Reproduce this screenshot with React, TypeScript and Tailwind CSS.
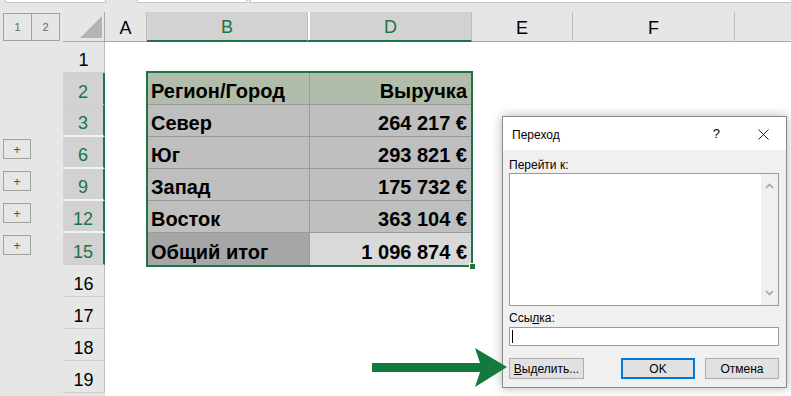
import { Fragment } from 'react';

const sheetFont = { fontFamily: '"Liberation Sans", Arial, sans-serif' };

type Row = { n: number; h: string; sel: boolean; hidden?: boolean; plus?: boolean };

const rows: Row[] = [
  { n: 1, h: 'h-[31px]', sel: false },
  { n: 2, h: 'h-[32px]', sel: true },
  { n: 3, h: 'h-[32px]', sel: true, hidden: true },
  { n: 6, h: 'h-[32px]', sel: true, hidden: true, plus: true },
  { n: 9, h: 'h-[32px]', sel: true, hidden: true, plus: true },
  { n: 12, h: 'h-[32px]', sel: true, hidden: true, plus: true },
  { n: 15, h: 'h-[32px]', sel: true, plus: true },
  { n: 16, h: 'h-[32px]', sel: false },
  { n: 17, h: 'h-[32px]', sel: false },
  { n: 18, h: 'h-[32px]', sel: false },
  { n: 19, h: 'h-[32px]', sel: false },
];

const data = [
  { name: 'Север', value: '264 217 €' },
  { name: 'Юг', value: '293 821 €' },
  { name: 'Запад', value: '175 732 €' },
  { name: 'Восток', value: '363 104 €' },
];

function ColHeader({ label, w, sel }: { label: string; w: string; sel?: boolean }) {
  return (
    <div
      className={`${w} flex shrink-0 items-center justify-center pt-[3px] text-[18px] ${
        sel
          ? 'border-b-2 border-b-[#217346] bg-[#d2d2d2] text-[#217346]'
          : 'border-b border-b-[#ababab] text-black'
      } border-r border-r-[#bdbdbd]`}
    >
      {label}
    </div>
  );
}

function GoToDialog() {
  return (
    <div
      className="absolute left-[502px] top-[116px] flex h-[272px] w-[285px] flex-col border border-[#8a8a8a] bg-[#f0f0f0] text-[12px] text-black shadow-[0_0_10px_rgba(0,0,0,0.3)]"
      style={{ fontFamily: '"Liberation Sans", Arial, sans-serif' }}
    >
      <div className="flex h-[33px] items-center bg-white pl-[9px] pr-[17px]">
        <span className="pt-[2px]">Переход</span>
        <span className="ml-auto mr-[38px] pt-[1px] text-[13px]">?</span>
        <svg width="11" height="11" viewBox="0 0 11 11" className="mt-[1px]">
          <path d="M0.5 0.5 L10.5 10.5 M10.5 0.5 L0.5 10.5" stroke="#222" strokeWidth="1" />
        </svg>
      </div>
      <div className="flex flex-1 flex-col pl-[6px] pr-[7px]">
        <div className="mt-[7px] h-[16px] leading-[16px]">Перейти к:</div>
        <div className="flex h-[133px] border border-[#9a9a9a] bg-white">
          <div className="flex-1" />
          <div className="flex w-[17px] flex-col items-center justify-between bg-[#f0f0f0] py-[9px]">
            <svg width="9" height="6" viewBox="0 0 9 6">
              <path d="M1 5 L4.5 1.5 L8 5" stroke="#a6a6a6" strokeWidth="1.6" fill="none" />
            </svg>
            <svg width="9" height="6" viewBox="0 0 9 6">
              <path d="M1 1 L4.5 4.5 L8 1" stroke="#a6a6a6" strokeWidth="1.6" fill="none" />
            </svg>
          </div>
        </div>
        <div className="mt-[4px] h-[16px] leading-[16px]">
          Ссы<span className="underline">л</span>ка:
        </div>
        <div className="mt-[1px] flex h-[19px] items-center border border-[#9a9a9a] bg-white pl-[2px]">
          <div className="h-[13px] w-px bg-black" />
        </div>
        <div className="mt-[12px] flex h-[21px]">
          <button className="flex w-[75px] items-center justify-center border border-[#adadad] bg-[#e1e1e1]">
            <span>
              <span className="underline">В</span>ыделить...
            </span>
          </button>
          <button className="ml-auto flex w-[74px] items-center justify-center border-2 border-[#0078d7] bg-[#e1e1e1]">
            OK
          </button>
          <button className="ml-[10px] flex w-[74px] items-center justify-center border border-[#adadad] bg-[#e1e1e1]">
            Отмена
          </button>
        </div>
      </div>
    </div>
  );
}

export default function App() {
  return (
    <div className="relative h-[396px] w-[791px] overflow-hidden bg-[#e6e6e6]" style={sheetFont}>
      {/* formula bar edge */}
      <div className="flex h-[12px] items-start">
        <div className="ml-[5px] h-[3px] w-[101px] border-x border-b border-[#c6c6c6] bg-white" />
        <div className="ml-[31px] h-[3px] w-[110px] border-x border-b border-[#c6c6c6] bg-white" />
        <div className="ml-[3px] h-[3px] flex-1 border-l border-b border-[#c6c6c6] bg-white" />
      </div>

      {/* column headers */}
      <div className="flex h-[30px]">
        <div className="w-[63px] shrink-0 pl-[3px] pt-[1px]">
          <div className="flex h-[28px] w-[57px] border border-[#a0a0a0] text-[11px] text-[#666]">
            <div className="flex flex-1 items-center justify-center border-r border-[#a0a0a0]">1</div>
            <div className="flex flex-1 items-center justify-center">2</div>
          </div>
        </div>
        <div className="relative w-[42px] shrink-0 border-b border-r border-[#ababab]">
          <svg width="42" height="29" viewBox="0 0 42 29" className="absolute inset-0">
            <polygon points="17,26 39,26 39,4" fill="#b4b4b4" />
          </svg>
        </div>
        <ColHeader label="A" w="w-[42px]" />
        <ColHeader label="B" w="w-[161px]" sel />
        <div className="w-[2px] shrink-0 border-b-2 border-b-[#217346] bg-white" />
        <ColHeader label="D" w="w-[162px]" sel />
        <ColHeader label="E" w="w-[101px]" />
        <ColHeader label="F" w="w-[162px]" />
        <div className="flex-1 border-b border-b-[#ababab]" />
      </div>

      {/* body */}
      <div className="flex">
        <div className="w-[63px] shrink-0">
          {rows.map((r) => (
            <div key={r.n} className={`${r.h} pl-[3px] pt-[2px]`}>
              {r.plus ? (
                <div className="flex h-[20px] w-[28px] items-center justify-center border border-[#a0a0a0] text-[13px] leading-none text-[#555]">
                  +
                </div>
              ) : null}
            </div>
          ))}
        </div>

        <div className="w-[42px] shrink-0">
          {rows.map((r) => (
            <div
              key={r.n}
              className={`${r.h} flex items-end justify-center pb-[2px] text-[18px] leading-[20px] ${
                r.sel
                  ? 'border-r-2 border-r-[#217346] bg-[#d2d2d2] text-[#217346]'
                  : 'border-r border-r-[#bdbdbd] text-black'
              } ${
                r.hidden ? 'border-b-2 border-b-[#f2f2f2]' : 'border-b border-b-[#cfcfcf]'
              }`}
            >
              {r.n}
            </div>
          ))}
        </div>

        <div className="relative h-[354px] flex-1 bg-white">
          <div className="relative ml-[41px] mt-[29px] w-[327px] border-2 border-[#217346] text-[20px] font-bold text-black">
            <div className="flex h-[32px] border-b border-[#9b9b9b] bg-[#b1bdaa]">
              <div className="flex w-[162px] items-end border-r border-[#9b9b9b] pb-[2px] pl-[3px] leading-[22px]">
                Регион/Город
              </div>
              <div className="flex flex-1 items-end justify-end pb-[2px] pr-[4px] leading-[22px]">Выручка</div>
            </div>
            {data.map((d) => (
              <Fragment key={d.name}>
                <div className="flex h-[32px] border-b border-[#9b9b9b] bg-[#bfbfbf]">
                  <div className="flex w-[162px] items-end border-r border-[#9b9b9b] pb-[2px] pl-[3px] leading-[22px]">
                    {d.name}
                  </div>
                  <div className="flex flex-1 items-end justify-end pb-[2px] pr-[4px] leading-[22px]">
                    {d.value}
                  </div>
                </div>
              </Fragment>
            ))}
            <div className="flex h-[32px]">
              <div className="flex w-[162px] items-end border-r border-[#9b9b9b] bg-[#a6a6a6] pb-[2px] pl-[3px] leading-[22px]">
                Общий итог
              </div>
              <div className="flex flex-1 items-end justify-end bg-[#d9d9d9] pb-[2px] pr-[4px] leading-[22px]">
                1 096 874 €
              </div>
            </div>
            <div className="absolute -bottom-[5px] -right-[5px] h-[7px] w-[7px] border border-white bg-[#217346]" />
          </div>
        </div>
      </div>

      <GoToDialog />

      {/* pointer arrow */}
      <svg width="140" height="45" viewBox="0 0 140 45" className="absolute left-[370px] top-[345px]">
        <polygon points="2,18 110,18 105,3 137,22 105,42 110,27 2,27" fill="#127a3f" />
      </svg>
    </div>
  );
}
